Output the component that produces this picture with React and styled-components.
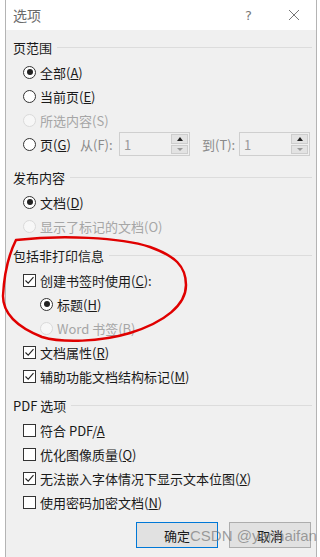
import styled, { createGlobalStyle } from "styled-components";

const GlobalStyle = createGlobalStyle`
    html, body {
        margin: 0;
        padding: 0;
        background: #ffffff;
    }
    body {
        font-family: "Noto Sans CJK SC", "Noto Sans", sans-serif;
        font-size: 13px;
        color: #1a1a1a;
    }
`;

const Page = styled.div`
    width: 320px;
    height: 557px;
    overflow: hidden;
    position: relative;
`;

const Dialog = styled.div`
    margin-left: 5px;
    width: 310px;
    height: 557px;
    border-left: 1px solid #b4b4b4;
    border-right: 1px solid #b4b4b4;
    display: flex;
    flex-direction: column;
`;

const TitleBar = styled.div`
    height: 30px;
    background: #ffffff;
    display: flex;
    align-items: center;
    padding-left: 7px;
    color: #6b6b6b;
    font-size: 14px;
`;

const TitleText = styled.span`
    flex-grow: 1;
`;

const TitleButton = styled.span`
    width: 45px;
    display: flex;
    justify-content: center;
    align-items: center;
    color: #777;
    font-family: "DejaVu Sans", sans-serif;
    font-size: 13px;
`;

const Body = styled.div`
    flex-grow: 1;
    background: #f0f0f0;
    padding: 4px 4px 0 7px;
    display: flex;
    flex-direction: column;
`;

const Heading = styled.div`
    height: 26px;
    margin-top: ${(p) => p.$gap || 0}px;
    display: flex;
    align-items: center;
    gap: 5px;
    color: #1a1a1a;
    white-space: nowrap;

    &::after {
        content: "";
        flex-grow: 1;
        height: 1px;
        background: #dcdcdc;
    }
`;

const Row = styled.label`
    height: 24px;
    display: flex;
    align-items: center;
    gap: 4px;
    white-space: nowrap;
    padding-left: ${(p) => (p.$level === 2 ? 27 : 10)}px;
    color: ${(p) => (p.$disabled ? "#a6a6a6" : "#1a1a1a")};

    & > * {
        flex-shrink: 0;
    }
`;

const RadioMark = styled.span`
    box-sizing: border-box;
    width: 13px;
    height: 13px;
    border-radius: 50%;
    border: 1px solid ${(p) => (p.$disabled ? "#dadada" : "#333")};
    background: ${(p) => (p.$disabled ? "#f7f7f7" : "#fff")};
    display: flex;
    align-items: center;
    justify-content: center;

    &::after {
        content: "";
        width: 6px;
        height: 6px;
        border-radius: 50%;
        background: #222;
        display: ${(p) => (p.$checked ? "block" : "none")};
    }
`;

const CheckMark = styled.span`
    box-sizing: border-box;
    width: 13px;
    height: 13px;
    border: 1px solid #333;
    background: #fff;
    display: flex;
    align-items: center;
    justify-content: center;
`;

const PageLabel = styled.span`
    width: 36px;
`;

const FieldLabel = styled.span`
    color: #8a8a8a;
    margin-left: ${(p) => p.$left}px;
    width: ${(p) => p.$width}px;
`;

const SpinBox = styled.div`
    box-sizing: border-box;
    width: 71px;
    height: 24px;
    border: 1px solid #cfcfcf;
    background: #f0f0f0;
    display: flex;
    align-items: stretch;
`;

const SpinValue = styled.span`
    flex-grow: 1;
    display: flex;
    align-items: center;
    padding-left: 4px;
    color: #9a9a9a;
`;

const SpinButtons = styled.div`
    width: 17px;
    display: flex;
    flex-direction: column;
    gap: 1px;
    padding: 1px 1px 1px 0;
`;

const SpinButton = styled.span`
    flex-grow: 1;
    background: #e3e3e3;
    border: 1px solid #cdcdcd;
    display: flex;
    align-items: center;
    justify-content: center;

    &::after {
        content: "";
        border-left: 3px solid transparent;
        border-right: 3px solid transparent;
        ${(p) =>
            p.$down
                ? "border-top: 3px solid #9a9a9a;"
                : "border-bottom: 4px solid #222;"}
    }
`;

const Footer = styled.div`
    margin-top: 8px;
    display: flex;
    justify-content: flex-end;
    gap: 11px;
    padding-right: 1px;
`;

const Button = styled.button`
    box-sizing: border-box;
    width: 82px;
    height: 26px;
    font-family: inherit;
    font-size: 13px;
    color: #1a1a1a;
    background: #e1e1e1;
    border: 1px solid ${(p) => (p.$primary ? "#0078d7" : "#adadad")};
    padding: 0;
`;

const Watermark = styled.div`
    position: absolute;
    left: 190px;
    top: 527px;
    font-family: "Liberation Sans", sans-serif;
    font-size: 15px;
    color: rgba(120, 120, 120, 0.7);
    white-space: nowrap;
`;

const Scribble = styled.svg`
    position: absolute;
    left: 0;
    top: 0;
    pointer-events: none;
`;

function Radio({ checked, disabled, children, level }) {
    return (
        <Row $level={level} $disabled={disabled}>
            <RadioMark $checked={checked} $disabled={disabled} />
            <span>{children}</span>
        </Row>
    );
}

function Check({ checked, children, level }) {
    return (
        <Row $level={level}>
            <CheckMark>
                {checked && (
                    <svg width="11" height="11" viewBox="0 0 11 11">
                        <path d="M1.5 5.5 L4.2 8.2 L9.5 2.2" fill="none" stroke="#222" strokeWidth="1.1" />
                    </svg>
                )}
            </CheckMark>
            <span>{children}</span>
        </Row>
    );
}

function Spin() {
    return (
        <SpinBox>
            <SpinValue>1</SpinValue>
            <SpinButtons>
                <SpinButton />
                <SpinButton $down />
            </SpinButtons>
        </SpinBox>
    );
}

export default function App() {
    return (
        <Page>
            <GlobalStyle />
            <Dialog>
                <TitleBar>
                    <TitleText>选项</TitleText>
                    <TitleButton>?</TitleButton>
                    <TitleButton>
                        <svg width="12" height="12" viewBox="0 0 12 12">
                            <path d="M1 1 L11 11 M11 1 L1 11" stroke="#777" strokeWidth="1" />
                        </svg>
                    </TitleButton>
                </TitleBar>
                <Body>
                    <Heading>页范围</Heading>
                    <Radio checked>全部(<u>A</u>)</Radio>
                    <Radio>当前页(<u>E</u>)</Radio>
                    <Radio disabled>所选内容(S)</Radio>
                    <Row $level={1}>
                        <RadioMark />
                        <PageLabel>页(<u>G</u>)</PageLabel>
                        <FieldLabel $left={0} $width={35}>从(F):</FieldLabel>
                        <Spin />
                        <FieldLabel $left={8} $width={33}>到(T):</FieldLabel>
                        <Spin />
                    </Row>
                    <Heading $gap={8}>发布内容</Heading>
                    <Radio checked>文档(<u>D</u>)</Radio>
                    <Radio disabled>显示了标记的文档(O)</Radio>
                    <Heading $gap={4}>包括非打印信息</Heading>
                    <Check checked>创建书签时使用(<u>C</u>):</Check>
                    <Radio level={2} checked>标题(<u>H</u>)</Radio>
                    <Radio level={2} disabled>Word 书签(B)</Radio>
                    <Check checked>文档属性(<u>R</u>)</Check>
                    <Check checked>辅助功能文档结构标记(<u>M</u>)</Check>
                    <Heading $gap={4}>PDF 选项</Heading>
                    <Check>符合 PDF/<u>A</u></Check>
                    <Check>优化图像质量(<u>Q</u>)</Check>
                    <Check checked>无法嵌入字体情况下显示文本位图(<u>X</u>)</Check>
                    <Check>使用密码加密文档(<u>N</u>)</Check>
                    <Footer>
                        <Button $primary>确定</Button>
                        <Button>取消</Button>
                    </Footer>
                </Body>
            </Dialog>
            <Scribble width="320" height="557" viewBox="0 0 320 557">
                <path
                    d="M16 240 C 60 235, 120 237, 150 247 C 175 256, 186 266, 186 285 C 186 305, 165 322, 130 333 C 100 342, 62 343, 42 337 C 22 329, 3 316, 3 296 C 4 276, 8 256, 16 240"
                    fill="none"
                    stroke="#e00000"
                    strokeWidth="2.5"
                    strokeLinecap="round"
                />
            </Scribble>
            <Watermark>CSDN @yanhaifan</Watermark>
        </Page>
    );
}
